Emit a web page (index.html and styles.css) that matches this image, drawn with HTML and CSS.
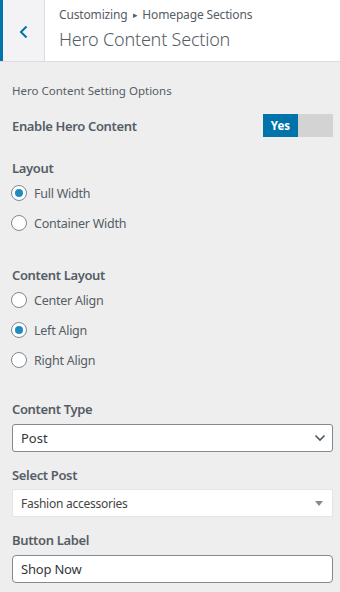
FILE: index.html
```html
<!DOCTYPE html>
<html>
<head>
<meta charset="utf-8">
<link rel="stylesheet" href="styles.css">
</head>
<body>
<div class="header">
  <div class="back">
    <svg width="12" height="14" viewBox="0 0 12 14"><path d="M8.5 1.5 L3 7 L8.5 12.5" fill="none" stroke="#0073aa" stroke-width="2"/></svg>
  </div>
  <div class="titles">
    <div class="crumb">Customizing <span class="tri">&#9656;</span> Homepage Sections</div>
    <div class="title">Hero Content Section</div>
  </div>
</div>
<div class="content">
  <div class="desc">Hero Content Setting Options</div>
  <div class="toggle-row">
    <span class="label">Enable Hero Content</span>
    <span class="toggle"><span class="yes">Yes</span><span class="no"></span></span>
  </div>
  <div class="label sec1">Layout</div>
  <div class="radio"><span class="circle on"></span>Full Width</div>
  <div class="radio"><span class="circle"></span>Container Width</div>
  <div class="label sec2">Content Layout</div>
  <div class="radio"><span class="circle"></span>Center Align</div>
  <div class="radio"><span class="circle on"></span>Left Align</div>
  <div class="radio"><span class="circle"></span>Right Align</div>
  <div class="label sec3">Content Type</div>
  <div class="select">Post
    <svg class="chev" width="12" height="8" viewBox="0 0 12 8"><path d="M1.5 1.5 L6 6 L10.5 1.5" fill="none" stroke="#50575e" stroke-width="1.6"/></svg>
  </div>
  <div class="label sec4">Select Post</div>
  <div class="select2">Fashion accessories<span class="arrow"></span></div>
  <div class="label sec4">Button Label</div>
  <div class="input">Shop Now</div>
</div>
</body>
</html>
```
FILE: styles.css
```css
html, body { margin: 0; padding: 0; }
body {
  background: #eeeeee;
  font-family: "Noto Sans", "Open Sans", sans-serif;
  color: #50575e;
  width: 340px;
  height: 592px;
  overflow: hidden;
}
.header {
  display: flex;
  height: 61px;
  background: #fff;
  border-bottom: 1px solid #dddddd;
}
.back {
  width: 41px;
  border-left: 3px solid #0073aa;
  border-right: 1px solid #dddddd;
  background: #f3f3f5;
  display: flex;
  align-items: center;
  justify-content: center;
}
.back svg { margin-top: 2px; margin-left: 1px; }
.titles { padding-left: 14px; }
.crumb {
  font-size: 12px;
  line-height: 18px;
  margin-top: 6px;
  color: #555d66;
  letter-spacing: -0.15px;
}
.tri { font-size: 9px; position: relative; top: -1px; margin: 0 2px; }
.title {
  font-size: 18px;
  font-weight: 300;
  line-height: 26px;
  color: #555d66;
  margin-top: 1px;
  letter-spacing: -0.2px;
}
.content { padding: 0 7px 0 12px; }
.desc {
  margin-top: 20px;
  font-size: 11.5px;
  line-height: 18px;
  color: #555d66;
}
.toggle-row {
  margin-top: 14px;
  height: 23px;
  display: flex;
  align-items: center;
  justify-content: space-between;
}
.label {
  font-size: 13px;
  font-weight: 600;
  line-height: 20px;
  color: #555d66;
  letter-spacing: -0.35px;
}
.toggle { display: flex; height: 23px; width: 70px; letter-spacing: 0; }
.yes {
  width: 35px;
  background: #0073aa;
  color: #fff;
  font-size: 11.5px;
  font-weight: 700;
  line-height: 23px;
  text-align: center;
}
.no { flex: 1; background: #d3d3d3; }
.sec1 { margin-top: 21px; }
.sec2 { margin-top: 27px; }
.sec3 { margin-top: 24px; }
.sec4 { margin-top: 13px; }
.radio {
  height: 30px;
  display: flex;
  align-items: center;
  font-size: 12.5px;
  letter-spacing: -0.25px;
  color: #555d66;
}
.circle {
  box-sizing: border-box;
  width: 16px;
  height: 16px;
  border: 1px solid #7e8993;
  border-radius: 50%;
  background: #fff;
  margin-left: -1px;
  margin-right: 7px;
  display: flex;
  align-items: center;
  justify-content: center;
}
.circle.on::after {
  content: "";
  width: 8px;
  height: 8px;
  border-radius: 50%;
  background: #1e8cbe;
}
.select, .input, .select2 {
  box-sizing: border-box;
  height: 28px;
  display: flex;
  align-items: center;
  font-size: 13px;
  background: #fff;
  color: #32373c;
}
.select {
  margin-top: 5px;
  border: 1px solid #7e8993;
  border-radius: 3px;
  padding: 0 8px;
  justify-content: space-between;
}
.chev { margin-right: -2px; }
.select2 {
  margin-top: 4px;
  border: 1px solid #e2e4e7;
  border-radius: 2px;
  padding: 0 8px;
  justify-content: space-between;
  font-size: 12px;
  letter-spacing: -0.25px;
  color: #444;
}
.arrow {
  width: 0; height: 0;
  border-left: 4px solid transparent;
  border-right: 4px solid transparent;
  border-top: 5px solid #888;
  margin-right: 1px;
}
.input {
  margin-top: 5px;
  border: 1px solid #7e8993;
  border-radius: 4px;
  padding: 0 8px;
  font-size: 13px;
  letter-spacing: -0.2px;
}
```
